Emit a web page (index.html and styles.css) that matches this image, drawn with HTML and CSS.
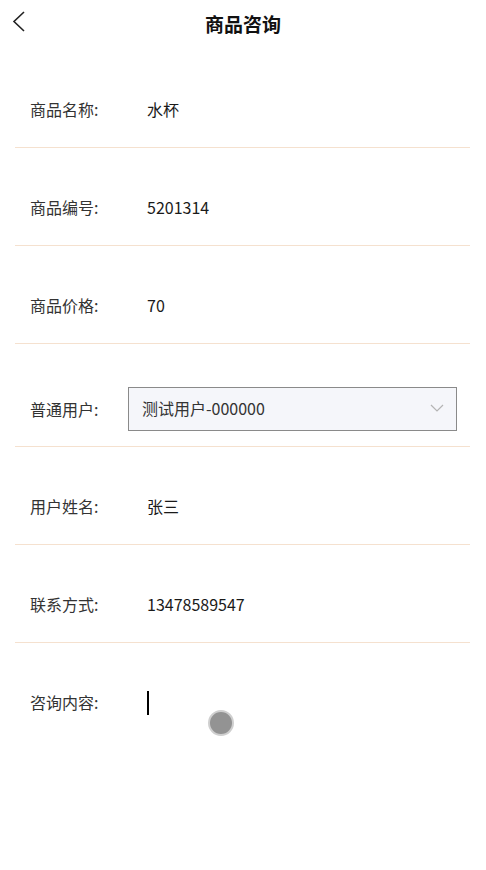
FILE: index.html
```
<!DOCTYPE html>
<html>
<head>
  <meta charset="utf-8">
  <link rel="stylesheet" href="styles.css">
</head>
<body>
  <div class="header">
    <svg class="back" width="14" height="22" viewBox="0 0 14 22">
      <path d="M12 1 L2 10.5 L12 20" fill="none" stroke="#222" stroke-width="1.6"/>
    </svg>
    <h1>商品咨询</h1>
  </div>

  <div class="form">
    <div class="row">
      <span class="label">商品名称:</span>
      <span class="value">水杯</span>
    </div>
    <div class="row">
      <span class="label">商品编号:</span>
      <span class="value">5201314</span>
    </div>
    <div class="row">
      <span class="label">商品价格:</span>
      <span class="value">70</span>
    </div>
    <div class="row row-select">
      <span class="label">普通用户:</span>
      <div class="select">
        <span>测试用户-000000</span>
        <svg width="14" height="8" viewBox="0 0 14 8">
          <path d="M1 1 L7 7 L13 1" fill="none" stroke="#b4b4b4" stroke-width="1.2"/>
        </svg>
      </div>
    </div>
    <div class="row">
      <span class="label">用户姓名:</span>
      <span class="value">张三</span>
    </div>
    <div class="row">
      <span class="label">联系方式:</span>
      <span class="value">13478589547</span>
    </div>
    <div class="row row-last">
      <span class="label">咨询内容:</span>
      <span class="value"><span class="caret"></span></span>
    </div>
  </div>

  <div class="touch"></div>
</body>
</html>
```

FILE: styles.css
```
body {
  margin: 0;
  background-color: #fff;
  color: #333;
  font-family: "Noto Sans CJK SC", "Noto Sans", sans-serif;
}
.header {
  position: relative;
  height: 50px;
  display: flex;
  justify-content: center;
}
.header h1 {
  margin: 0;
  padding-top: 10px;
  font-size: 19px;
  line-height: 28px;
  font-weight: bold;
  color: #111;
}
.back {
  position: absolute;
  left: 12px;
  top: 11px;
}
.row {
  display: flex;
  align-items: center;
  height: 44px;
  padding: 37px 0 16px;
  margin: 0 16px 0 15px;
  border-bottom: 1px solid #f5e1cf; /* peach divider */
}
.row-select {
  padding: 43px 0 15px;
}
.row-last {
  border-bottom: none;
}
.label {
  width: 98px;
  padding-left: 15px;
  font-size: 16px;
  color: #333;
}
.value {
  padding-left: 19px;
  font-size: 16px;
  color: #1a1a1a;
  display: flex;
  align-items: center;
}
.select {
  box-sizing: border-box;
  width: 329px;
  height: 44px;
  display: flex;
  align-items: center;
  justify-content: space-between;
  padding: 0 12px 2px 13px;
  background-color: #f5f6fa;
  border: 1px solid #8a8a8a;
  font-size: 16px;
  color: #333;
}
.caret {
  display: block;
  width: 2px;
  height: 24px;
  margin-top: 2px;
  background-color: #000;
}
.touch {
  position: absolute;
  left: 208px;
  top: 710px;
  width: 22px;
  height: 22px;
  border-radius: 50%;
  background-color: #939393;
  border: 2px solid #cfcfcf;
}
```
